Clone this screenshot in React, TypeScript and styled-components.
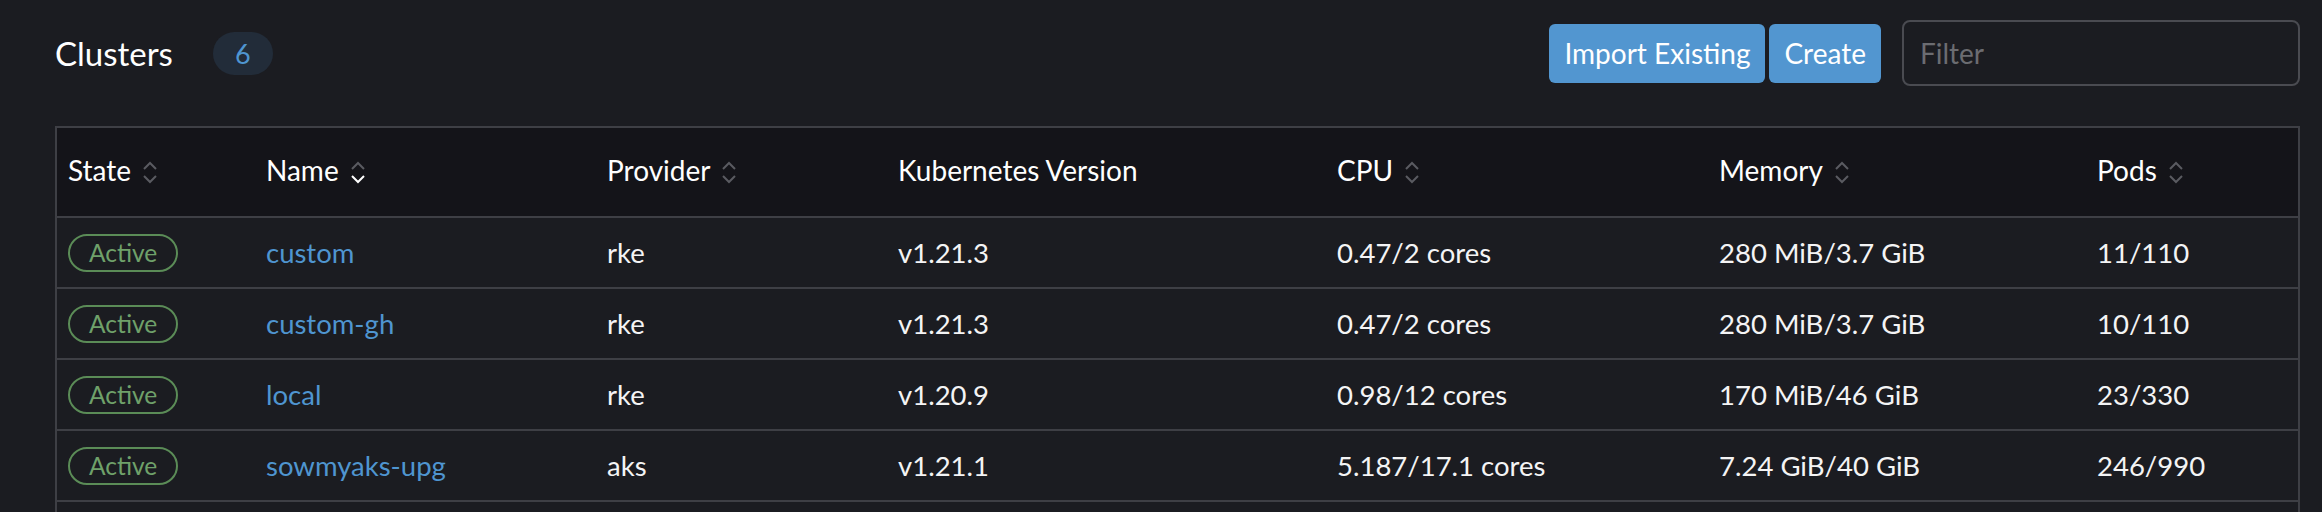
import React from "react";
import styled, { createGlobalStyle } from "styled-components";

const GlobalStyle = createGlobalStyle`
  html, body {
    margin: 0;
    padding: 0;
    background: #1b1c21;
    font-family: Lato, "Noto Sans", sans-serif;
    color: #f4f4f5;
  }
`;

const Page = styled.div`
  padding: 20px 22px 0 55px;
`;

const TopBar = styled.div`
  display: flex;
  align-items: center;
  height: 66px;
  margin-bottom: 40px;
`;

const Title = styled.h1`
  margin: 0;
  font-size: 33px;
  font-weight: 400;
  color: #ffffff;
`;

const Count = styled.span`
  display: inline-flex;
  align-items: center;
  justify-content: center;
  width: 60px;
  height: 43px;
  margin-left: 40px;
  border-radius: 22px;
  background: #222c39;
  color: #4f95d0;
  font-size: 27px;
`;

const Spacer = styled.div`
  flex: 1;
`;

const Button = styled.button`
  height: 59px;
  padding: 0 15px;
  margin-right: 4px;
  border: 0;
  border-radius: 6px;
  background: #5296d0;
  color: #ffffff;
  font-family: Lato, sans-serif;
  font-size: 28px;
`;

const Filter = styled.input`
  box-sizing: border-box;
  width: 398px;
  height: 66px;
  margin-left: 17px;
  padding: 0 16px;
  border: 2px solid #4a4b51;
  border-radius: 8px;
  background: transparent;
  color: #f4f4f5;
  font-family: Lato, sans-serif;
  font-size: 28px;
  &::placeholder {
    color: #6b6c71;
  }
`;

const Table = styled.table`
  width: 100%;
  table-layout: fixed;
  border-collapse: collapse;
  border: 2px solid #3e3f45;
  font-size: 27.5px;
`;

const Th = styled.th`
  box-sizing: border-box;
  height: 90px;
  padding: 0 11px 4px;
  background: #141419;
  border-bottom: 2px solid #3e3f45;
  text-align: left;
  font-size: 28px;
  font-weight: 400;
  color: #ffffff;
  white-space: nowrap;
`;

const HeadInner = styled.span`
  display: inline-flex;
  align-items: center;
  gap: 11px;
`;

const Td = styled.td`
  height: 69px;
  padding: 0 11px;
  border-bottom: 2px solid #3e3f45;
  white-space: nowrap;
`;

const Badge = styled.span`
  display: inline-flex;
  align-items: center;
  box-sizing: border-box;
  height: 38px;
  padding: 0 19px;
  border: 2px solid #5b8c57;
  border-radius: 19px;
  color: #6fa16a;
  font-size: 24.5px;
`;

const NameLink = styled.a`
  color: #4f95d0;
  text-decoration: none;
`;

const SortIcon = ({ active }: { active?: boolean }) => (
  <svg width="16" height="26" viewBox="0 0 16 26" fill="none" strokeWidth="2" style={{ marginTop: 6 }}>
    <path d="M2 9 L8 3 L14 9" stroke="#5a5b61" />
    <path d="M2 16 L8 22 L14 16" stroke={active ? "#ffffff" : "#5a5b61"} />
  </svg>
);

const columns = [
  { label: "State", width: 199, sort: true },
  { label: "Name", width: 341, sort: true, active: true },
  { label: "Provider", width: 291, sort: true },
  { label: "Kubernetes Version", width: 439, sort: false },
  { label: "CPU", width: 382, sort: true },
  { label: "Memory", width: 378, sort: true },
  { label: "Pods", width: undefined, sort: true },
];

const rows = [
  { name: "custom", provider: "rke", version: "v1.21.3", cpu: "0.47/2 cores", memory: "280 MiB/3.7 GiB", pods: "11/110" },
  { name: "custom-gh", provider: "rke", version: "v1.21.3", cpu: "0.47/2 cores", memory: "280 MiB/3.7 GiB", pods: "10/110" },
  { name: "local", provider: "rke", version: "v1.20.9", cpu: "0.98/12 cores", memory: "170 MiB/46 GiB", pods: "23/330" },
  { name: "sowmyaks-upg", provider: "aks", version: "v1.21.1", cpu: "5.187/17.1 cores", memory: "7.24 GiB/40 GiB", pods: "246/990" },
  { name: "staging", provider: "rke2", version: "v1.21.4", cpu: "1.2/8 cores", memory: "2.1 GiB/15 GiB", pods: "31/220" },
  { name: "test-eks", provider: "eks", version: "v1.20.7", cpu: "0.8/4 cores", memory: "900 MiB/7.6 GiB", pods: "18/110" },
];

export default function App() {
  return (
    <>
      <GlobalStyle />
      <Page>
        <TopBar>
          <Title>Clusters</Title>
          <Count>6</Count>
          <Spacer />
          <Button>Import Existing</Button>
          <Button>Create</Button>
          <Filter placeholder="Filter" />
        </TopBar>
        <Table>
          <colgroup>
            {columns.map((c) => (
              <col key={c.label} style={c.width ? { width: c.width } : undefined} />
            ))}
          </colgroup>
          <thead>
            <tr>
              {columns.map((c) => (
                <Th key={c.label}>
                  <HeadInner>
                    {c.label}
                    {c.sort && <SortIcon active={c.active} />}
                  </HeadInner>
                </Th>
              ))}
            </tr>
          </thead>
          <tbody>
            {rows.map((r) => (
              <tr key={r.name}>
                <Td>
                  <Badge>Active</Badge>
                </Td>
                <Td>
                  <NameLink href="#">{r.name}</NameLink>
                </Td>
                <Td>{r.provider}</Td>
                <Td>{r.version}</Td>
                <Td>{r.cpu}</Td>
                <Td>{r.memory}</Td>
                <Td>{r.pods}</Td>
              </tr>
            ))}
          </tbody>
        </Table>
      </Page>
    </>
  );
}
